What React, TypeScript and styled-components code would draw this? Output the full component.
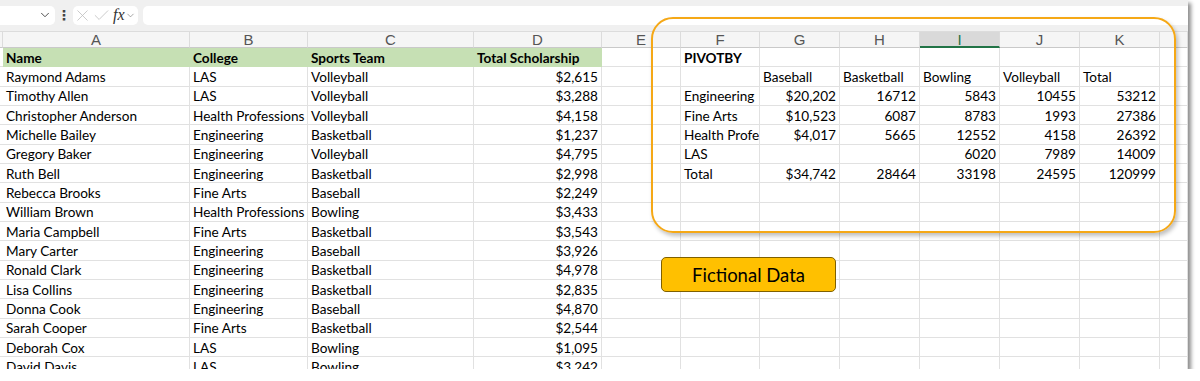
import React from 'react'
import styled, { createGlobalStyle } from 'styled-components'
import { X, Check, ChevronDown } from 'lucide-react'

const GlobalStyle = createGlobalStyle`
  body {
    margin: 0;
    background: #fff;
    font-family: Lato, "Liberation Sans", sans-serif;
  }
`

// column widths: row-header stub, A..L
const COLS = [3, 187, 118, 166, 128, 79, 79, 80, 80, 80, 80, 80, 28]
const LETTERS = ['', 'A', 'B', 'C', 'D', 'E', 'F', 'G', 'H', 'I', 'J', 'K', '']
const GREEN = '#c6e0b4'

type CellData = { text?: string; right?: boolean; bold?: boolean; fill?: string }

const students: [string, string, string, string][] = [
  ['Raymond Adams', 'LAS', 'Volleyball', '$2,615'],
  ['Timothy Allen', 'LAS', 'Volleyball', '$3,288'],
  ['Christopher Anderson', 'Health Professions', 'Volleyball', '$4,158'],
  ['Michelle Bailey', 'Engineering', 'Basketball', '$1,237'],
  ['Gregory Baker', 'Engineering', 'Volleyball', '$4,795'],
  ['Ruth Bell', 'Engineering', 'Basketball', '$2,998'],
  ['Rebecca Brooks', 'Fine Arts', 'Baseball', '$2,249'],
  ['William Brown', 'Health Professions', 'Bowling', '$3,433'],
  ['Maria Campbell', 'Fine Arts', 'Basketball', '$3,543'],
  ['Mary Carter', 'Engineering', 'Baseball', '$3,926'],
  ['Ronald Clark', 'Engineering', 'Basketball', '$4,978'],
  ['Lisa Collins', 'Engineering', 'Basketball', '$2,835'],
  ['Donna Cook', 'Engineering', 'Baseball', '$4,870'],
  ['Sarah Cooper', 'Fine Arts', 'Basketball', '$2,544'],
  ['Deborah Cox', 'LAS', 'Bowling', '$1,095'],
  ['David Davis', 'LAS', 'Bowling', '$3,242'],
]

const pivot: string[][] = [
  ['', 'Baseball', 'Basketball', 'Bowling', 'Volleyball', 'Total'],
  ['Engineering', '$20,202', '16712', '5843', '10455', '53212'],
  ['Fine Arts', '$10,523', '6087', '8783', '1993', '27386'],
  ['Health Professions', '$4,017', '5665', '12552', '4158', '26392'],
  ['LAS', '', '', '6020', '7989', '14009'],
  ['Total', '$34,742', '28464', '33198', '24595', '120999'],
]

const buildRows = (): CellData[][] => {
  const rows: CellData[][] = []
  const header: CellData[] = [
    {},
    { text: 'Name', bold: true, fill: GREEN },
    { text: 'College', bold: true, fill: GREEN },
    { text: 'Sports Team', bold: true, fill: GREEN },
    { text: 'Total Scholarship', bold: true, fill: GREEN },
    {},
    { text: 'PIVOTBY', bold: true },
    {}, {}, {}, {}, {}, {},
  ]
  rows.push(header)
  students.forEach((s, i) => {
    const p = pivot[i]
    const pivotCells: CellData[] = p
      ? p.map((t, j) => ({ text: t, right: j > 0 && i > 0 }))
      : [{}, {}, {}, {}, {}, {}]
    rows.push([
      {},
      { text: s[0] },
      { text: s[1] },
      { text: s[2] },
      { text: s[3], right: true },
      {},
      ...pivotCells,
      {},
    ])
  })
  return rows
}

const App = () => {
  const rows = buildRows()
  return (
    <>
      <GlobalStyle />
      <Window>
        <FormulaBar>
          <NameBox>
            <ChevronDown size={14} strokeWidth={1.6} color="#444" />
          </NameBox>
          <Dots>⋮</Dots>
          <FuncBox>
            <X size={19} strokeWidth={1} color="#bdbdbd" />
            <Check size={19} strokeWidth={1} color="#bdbdbd" />
            <Fx>fx</Fx>
            <ChevronDown size={11} strokeWidth={1.4} color="#777" />
          </FuncBox>
          <FormulaInput />
        </FormulaBar>
        <Sheet>
          {LETTERS.map((l, i) => (
            <ColHead key={'h' + i} $selected={l === 'I'}>{l}</ColHead>
          ))}
          {rows.map((r, ri) =>
            r.map((c, ci) => (
              <Cell key={ri + '-' + ci} $right={c.right} $bold={c.bold} $fill={c.fill}>
                {c.text}
              </Cell>
            ))
          )}
        </Sheet>
        <Highlight />
        <Badge>Fictional Data</Badge>
      </Window>
    </>
  )
}

const Window = styled.div`
  position: relative;
  width: 1188px;
  height: 369px;
  overflow: hidden;
  background: #fff;
  box-shadow: 3px 3px 4px rgba(0, 0, 0, 0.45);
`

const FormulaBar = styled.div`
  box-sizing: border-box;
  height: 32px;
  display: flex;
  align-items: center;
  background: #f0f0f0;
  border-bottom: 1px solid #dcdcdc;
  padding-bottom: 1px;
`

const NameBox = styled.div`
  width: 55px;
  height: 19px;
  box-sizing: border-box;
  background: #fff;
  border-radius: 0 5px 5px 0;
  display: flex;
  align-items: center;
  justify-content: flex-end;
  padding-right: 3px;
`

const Dots = styled.div`
  width: 18px;
  text-align: center;
  font-size: 14px;
  font-weight: 700;
  color: #444;
  font-family: "DejaVu Sans", sans-serif;
`

const FuncBox = styled.div`
  width: 65px;
  height: 19px;
  box-sizing: border-box;
  background: #fff;
  border-radius: 5px;
  display: flex;
  align-items: center;
  gap: 0;
  padding-left: 0;
`

const Fx = styled.span`
  font-family: "Liberation Serif", serif;
  font-style: italic;
  font-size: 16px;
  color: #333;
  margin-left: 2px;
`

const FormulaInput = styled.div`
  flex: 1;
  height: 19px;
  margin-left: 5px;
  background: #fff;
  border-radius: 5px 0 0 5px;
`

const Sheet = styled.div`
  display: grid;
  grid-template-columns: ${COLS.map((c) => c + 'px').join(' ')};
  grid-template-rows: 16px;
  grid-auto-rows: 19.33px;
`

const ColHead = styled.div<{ $selected?: boolean }>`
  box-sizing: border-box;
  background: ${(p) => (p.$selected ? '#d9d9d9' : '#f5f5f5')};
  border-right: 1px solid #dcdcdc;
  border-bottom: ${(p) => (p.$selected ? '2px solid #217346' : '1px solid #c9c9c9')};
  color: ${(p) => (p.$selected ? '#217346' : '#555')};
  font-family: "Liberation Sans", sans-serif;
  font-size: 15px;
  line-height: 16px;
  text-align: center;
`

const Cell = styled.div<{ $right?: boolean; $bold?: boolean; $fill?: string }>`
  box-sizing: border-box;
  background: ${(p) => p.$fill ?? '#fff'};
  border-right: 1px solid ${(p) => p.$fill ?? '#e1e1e1'};
  border-bottom: 1px solid ${(p) => p.$fill ?? '#e1e1e1'};
  padding: 1px 3px 0;
  font-size: 13.6px;
  font-weight: ${(p) => (p.$bold ? 700 : 400)};
  color: #000;
  text-align: ${(p) => (p.$right ? 'right' : 'left')};
  white-space: nowrap;
  overflow: hidden;
  display: flex;
  align-items: center;
  justify-content: ${(p) => (p.$right ? 'flex-end' : 'flex-start')};
`

const Highlight = styled.div`
  position: absolute;
  left: 651px;
  top: 17px;
  width: 525px;
  height: 216px;
  box-sizing: border-box;
  border: 2.5px solid #f5a816;
  border-radius: 22px;
  box-shadow: 2px 3px 4px rgba(0, 0, 0, 0.25);
  pointer-events: none;
`

const Badge = styled.div`
  position: absolute;
  left: 661px;
  top: 257px;
  width: 175px;
  height: 35px;
  box-sizing: border-box;
  background: #ffc000;
  border: 1px solid #7f6000;
  border-radius: 5px;
  display: flex;
  align-items: center;
  justify-content: center;
  font-size: 18.5px;
  color: #000;
`

export default App
